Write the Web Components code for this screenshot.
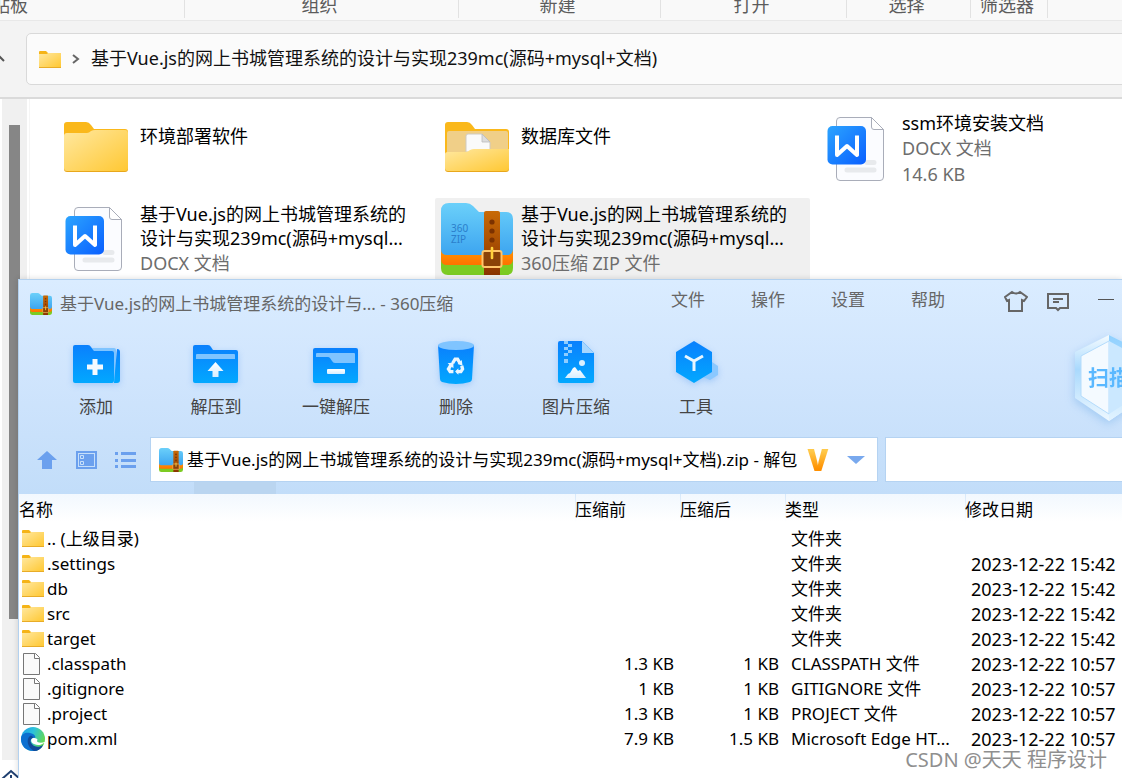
<!DOCTYPE html>
<html lang="zh-CN">
<head>
<meta charset="utf-8">
<title>360压缩</title>
<style>
  html, body {
    height: 100%;
    margin: 0;
    overflow: hidden;
  }

  body {
    font-family: "Noto Sans", "Noto Sans CJK SC", sans-serif;
    font-size: 18px;
    line-height: 24px;
    color: #000;
    background: #fff;
  }
</style>
</head>
<body>

<desktop-view>
  <file-explorer>
    <ribbon-bar slot="ribbon"></ribbon-bar>
    <address-bar slot="address">基于Vue.js的网上书城管理系统的设计与实现239mc(源码+mysql+文档)</address-bar>
    <file-tile icon="folder-big">环境部署软件</file-tile>
    <file-tile icon="folder-open">数据库文件</file-tile>
    <file-tile icon="docx" kind="DOCX 文档" size="14.6 KB">ssm环境安装文档</file-tile>
    <file-tile icon="docx" kind="DOCX 文档">基于Vue.js的网上书城管理系统的<br>设计与实现239mc(源码+mysql...</file-tile>
    <file-tile icon="zip-big" kind="360压缩 ZIP 文件" selected>基于Vue.js的网上书城管理系统的<br>设计与实现239mc(源码+mysql...</file-tile>
  </file-explorer>

  <zip-window slot="window">
    <zip-titlebar slot="title">基于Vue.js的网上书城管理系统的设计与... - 360压缩</zip-titlebar>
    <tool-button slot="tools" icon="add">添加</tool-button>
    <tool-button slot="tools" icon="extract">解压到</tool-button>
    <tool-button slot="tools" icon="one-key">一键解压</tool-button>
    <tool-button slot="tools" icon="delete">删除</tool-button>
    <tool-button slot="tools" icon="image">图片压缩</tool-button>
    <tool-button slot="tools" icon="tools">工具</tool-button>
    <scan-badge slot="badge">扫描</scan-badge>
    <zip-pathbar slot="path"></zip-pathbar>
    <archive-list></archive-list>
  </zip-window>

  <span slot="watermark">CSDN @天天 程序设计</span>
</desktop-view>

<script>
const DEFS = `
  <linearGradient id="y" x1="0" y1="0" x2="1" y2="1"><stop offset="0" stop-color="#ffe8a0"/><stop offset="1" stop-color="#ffc833"/></linearGradient>
  <linearGradient id="b" x1="0" y1="0" x2="0" y2="1"><stop offset="0" stop-color="#0a80fd"/><stop offset="1" stop-color="#02a8ff"/></linearGradient>
  <linearGradient id="w" x1="0" y1="0" x2="1" y2="1"><stop offset="0" stop-color="#2ba4ff"/><stop offset="1" stop-color="#0a5fff"/></linearGradient>
  <linearGradient id="s" x1="0" y1="0" x2="0" y2="1"><stop offset="0" stop-color="#6bd0fa"/><stop offset="1" stop-color="#3da5f0"/></linearGradient>
  <linearGradient id="o" x1="0" y1="0" x2="0" y2="1"><stop offset="0" stop-color="#ff9a00"/><stop offset="1" stop-color="#ff7200"/></linearGradient>
  <linearGradient id="n" x1="0" y1="0" x2="0" y2="1"><stop offset="0" stop-color="#c86a06"/><stop offset="1" stop-color="#8a3400"/></linearGradient>
  <linearGradient id="h" x1="0" y1="0" x2="0" y2="1"><stop offset="0" stop-color="#fff"/><stop offset="1" stop-color="#d6eeff"/></linearGradient>`;

const ZIP_BODY = `
  <path fill="#7ccb22" d="M0 48h72v17q0 7-7 7H7q-7 0-7-7z"/>
  <path fill="url(#o)" d="M0 44h72v12q0 6-6 6H6q-6 0-6-6z"/>
  <path fill="url(#s)" d="M0 8q0-8 8-8h17q4 0 7 3l6 6h27q7 0 7 7v30q0 6-6 6H6q-6 0-6-6z"/>
  <path fill="url(#n)" d="M43 10q0-2 2-2h12q2 0 2 2v62H43z"/>
  <g fill="#7c3200"><circle cx="51" cy="19" r="2.6"/><circle cx="51" cy="28" r="2.6"/><circle cx="51" cy="37" r="2.6"/></g>
  <rect x="41.500" y="48" width="19" height="16" rx="2" fill="#8a4208" stroke="#ffc56a" stroke-width="2"/>
  <path stroke="#ffd23c" stroke-width="2.600" stroke-linecap="round" d="M51 45v10"/>`;

const ICONS = {
  'folder-big': [72, 72, `
    <path fill="#fab81b" d="M4 12q0-3 3-3h19q3 0 5 3l3 4h31q3 0 3 3v8H4z"/>
    <path fill="#e8a71c" d="M4 24h64v32q0 3-3 3H7q-3 0-3-3z"/>
    <path fill="url(#y)" d="M4 23q0-3 3-3h20q2 0 4-2 2-1 4-1h30q3 0 3 3v35q0 3-3 3H7q-3 0-3-3z"/>`],
  'folder-open': [72, 72, `
    <path fill="#fab81b" d="M4 12q0-3 3-3h19q3 0 5 3l3 4h31q3 0 3 3v35H4z"/>
    <path fill="#f0cf88" d="M6 20q0-2 2-2h57q2 0 2 2v20H6z"/>
    <path fill="#fafafa" stroke="#cfcac0" d="M25 39V23q0-2 2-2h14l8 8v10z"/>
    <path fill="#ddd" stroke="#bbb" stroke-width=".8" d="M41 21v8h8z"/>
    <path fill="#e8a71c" d="M4 42h64v14q0 3-3 3H7q-3 0-3-3z"/>
    <path fill="url(#y)" d="M4 41q0-2 3-2h17q3 0 5-2 2-1 4-1h35v19q0 3-3 3H7q-3 0-3-3z"/>`],
  'docx': [72, 72, `
    <g transform="translate(1 0)">
      <path fill="#fbfcff" stroke="#a9adb9" d="M17 4.500h31.500l12 12V64q0 3.500-3.500 3.500H17q-3.500 0-3.500-3.500V8q0-3.500 3.500-3.500z"/>
      <path fill="#fff" stroke="#a9adb9" d="M48.500 4.500V14q0 2.500 2.500 2.500h9.500z"/>
      <path stroke="#e8eaed" stroke-width="5" stroke-linecap="round" d="M44 49.500h7M24 57h27"/>
      <rect x="4.500" y="13" width="38.500" height="38.500" rx="5" fill="url(#w)"/>
      <path fill="none" stroke="#fff" stroke-width="4" stroke-linejoin="round" d="M14 22.500V42l10-9 10 9V22.500"/>
    </g>`],
  'zip-big': [72, 72, ZIP_BODY + `
    <g fill="#2b7ecb"><text x="10" y="29" font-size="10">360</text><text x="10" y="40" font-size="10">ZIP</text></g>`],
  'zip': [72, 72, ZIP_BODY],
  'folder': [22, 17, `
    <path fill="#f5b417" d="M0 1q0-1 1-1h6l2 2h13v4H0z"/>
    <path fill="#e8ac28" d="M0 4h22v13H0z"/>
    <path fill="url(#y)" d="M0 3h8l1-1h13v14H0z"/>`],
  'file': [22, 24, `
    <path fill="#fafafa" stroke="#777" d="M2.500 1.500h12l4 4v17h-16z"/>
    <path fill="#fff" stroke="#777" d="M13.500 1.500v5h5"/>`],
  'edge': [24, 24, `
    <linearGradient id="e1" x1="0" y1="0" x2="1" y2=".4"><stop offset="0" stop-color="#1a9be8"/><stop offset=".5" stop-color="#2cc1dc"/><stop offset="1" stop-color="#62d957"/></linearGradient>
    <circle cx="12" cy="12" r="12" fill="url(#e1)"/>
    <path fill="#0d6fd0" d="M0 12C0 6 6 5 9 6c5 1 6 4 5 5-4-1-7 4-4 7 3 4 9 3 12 0-2 4-6 6-10 6C5 24 0 19 0 12z"/>
    <path fill="#114a9a" d="M9 9c-4 3-3 11 4 15 4 0 7-2 9-6-4 3-9 2-11-1-2-2-2-5 1-6 1 0-1-3-3-2z"/>
    <path fill="#fff" d="M12 11c-3 1-2 5 1 6 4 2 7 1 10-1l1 1v-2c-3 1-8 1-8-1 0-1 1-1 0-2s-2-1-4-1z"/>`],
  'add': [48, 48, `
    <path fill="#7fc4ff" d="M20 10h22q2 0 2 2v30h-5z"/>
    <path fill="url(#b)" d="M45 11q3 0 3 3v28q0 3-3 3h-3z"/>
    <path fill="url(#b)" d="M1 9q0-2 2-2h13q2 0 3 2l3 4h18q2 0 2 2v27q0 3-2 3H3q-2 0-2-2z"/>
    <path stroke="#f4faff" stroke-width="5" d="M23 21v16M15 29h16"/>`],
  'extract': [48, 48, `
    <path fill="url(#b)" d="M1 9q0-2 2-2h13q2 0 3 2l2 3h23q2 0 2 2v29q0 2-2 2H3q-2 0-2-2z"/>
    <path fill="#7fc4ff" d="M5 16h37q1 0 1 1v4H4v-4q0-1 1-1z"/>
    <path fill="url(#h)" d="M23.500 24l8 9h-5v6h-6v-6h-5z"/>`],
  'one-key': [48, 48, `
    <rect x="1" y="10" width="45" height="35" rx="2" fill="url(#b)"/>
    <path fill="#7fc4ff" d="M4 16q0-1 1-1h37q1 0 1 1v9H23q-2 0-3-2l-2-3q-1-1-2-1H4z"/>
    <rect x="15" y="31" width="18" height="5" rx="1" fill="url(#h)"/>`],
  'delete': [48, 48, `
    <path fill="url(#b)" d="M6 7h36l-2 34q0 2-2 3-14 4-28 0-2-1-2-3z"/>
    <ellipse cx="24" cy="7.500" rx="18" ry="4.500" fill="#7fc4ff"/>
    <g transform="translate(4 4.500) scale(.83)">
      <g fill="none" stroke="#e9f6ff" stroke-width="4"><path d="M20 25l3-5h3l3 5M31 28l1 4-2 3h-5M21 35h-4l-2-3 3-5"/></g>
      <path fill="#e9f6ff" d="M31 21l1 7-6-2zM27 31v8l-4-4zM14 25l7-1 0 7z"/>
    </g>`],
  'image': [48, 48, `
    <path fill="url(#b)" d="M8 3h22l12 12v28q0 2-2 2H8q-2 0-2-2V5q0-2 2-2z"/>
    <path fill="#a6d6ff" d="M30 3l12 12H30z"/>
    <path fill="#8fcdff" d="M12 3h4v3h-4zM16 6h4v3h-4zM12 9h4v3h-4zM16 12h4v3h-4zM12 15h4v3h-4zM12 21h4v4h-4z"/>
    <circle cx="30" cy="25" r="3" fill="#d8efff"/>
    <path fill="url(#h)" d="M13 40l3-4 2-1 3-5 2-1 3 4 2-1 3 4 3 4z"/>`],
  'tools': [48, 48, `
    <path fill="#8ac8ff" d="M40 24l6 4v9l-8 5-7-3z"/>
    <path fill="url(#b)" d="M22 3l18 11v20L22 45 4 34V14z"/>
    <path fill="none" stroke="#e9f6ff" stroke-width="3" d="M13 18l9 5 9-5M22 22v11"/>`],
  'up': [22, 20, `<path fill="#6ba0ee" d="M11 1l10 9h-5v9H6v-9H1z"/>`],
  'preview': [22, 20, `
    <path fill="none" stroke="#6ba0ee" stroke-width="2" d="M2 2h19v16H2z"/>
    <path fill="#6ba0ee" d="M4 4h15v12H4z"/>
    <path fill="none" stroke="#c8e0fa" d="M5.500 5.500h3v3h-3zM5.500 11.500h3v3h-3z"/>`],
  'list': [22, 20, `<path fill="#6ba0ee" d="M1 2h3v3H1zM7 2h15v3H7zM1 9h3v3H1zM7 9h15v3H7zM1 15h3v3H1zM7 15h15v3H7z"/>`],
  'shirt': [24, 24, `<path fill="none" stroke="#666" stroke-width="2" d="M8 2q4 3 8 0l7 5-3 4-2-1v11H5V10l-2 1-2-4z"/>`],
  'message': [24, 24, `
    <path fill="none" stroke="#666" stroke-width="2" d="M2 4h20v14h-8l-2 2-2-2H2z"/>
    <path stroke="#666" stroke-width="2" d="M7 9h10M7 12h6"/>`],
  'minimize': [16, 24, `<path stroke="#555" d="M0 9.500h16"/>`],
  'crumb': [8, 12, `<path fill="none" stroke="#666" stroke-width="2" d="M1 2l5 4-5 4"/>`],
  'caret': [8, 12, `<path fill="none" stroke="#555" stroke-width="2" d="M-3 8l3-4 4 4"/>`],
  'drop': [18, 10, `<path fill="#79a9ee" d="M0 1h18L9 9z"/>`],
  'home': [20, 12, `<path fill="none" stroke="#1f3f70" stroke-width="2" d="M1 11l9-8 9 8M10 7v5"/>`]
};

class AppIcon extends HTMLElement {
  constructor() {
    super();
    this.attachShadow({ mode: 'open' });
  }

  connectedCallback() {
    const [w, h, body] = ICONS[this.getAttribute('name')];
    this.shadowRoot.innerHTML = `
      <style>
        :host { display: block; flex: none; width: ${w}px; height: ${h}px; }
        svg { display: block; width: 100%; height: 100%; }
      </style>
      <svg viewBox="0 0 ${w} ${h}" aria-hidden="true"><defs>${DEFS}</defs>${body}</svg>
    `;
  }
}
customElements.define('app-icon', AppIcon);

// small helper for elements whose markup never changes
function define(name, render) {
  customElements.define(name, class extends HTMLElement {
    constructor() {
      super();
      this.attachShadow({ mode: 'open' });
    }

    connectedCallback() {
      this.shadowRoot.innerHTML = render(this);
    }
  });
}

define('desktop-view', () => `
  <style>
    :host { display: block; position: relative; height: 100vh; overflow: hidden; }
    .window { position: absolute; top: 279px; left: 18px; right: 0; bottom: 0; }
    .watermark {
      position: absolute; right: 15px; bottom: 6px;
      font-size: 20px; color: #8f8f8f; text-shadow: 0 0 2px #fff; white-space: nowrap;
    }
  </style>
  <slot></slot>
  <div class="window"><slot name="window"></slot></div>
  <div class="watermark"><slot name="watermark"></slot></div>
`);

define('file-explorer', () => `
  <style>
    :host { display: flex; flex-direction: column; height: 100%; }
    .body { flex: 1; display: flex; min-height: 0; }
    .side {
      flex: none; box-sizing: border-box; width: 30px;
      display: flex; flex-direction: column;
      border-left: 2px solid #fff; border-right: 1px solid #f5f5f5;
    }
    .track { flex: 1; width: 25px; background: #f0f0f0; padding-top: 26px; }
    .thumb { width: 11px; height: 494px; margin-left: 7px; background: #868686; }
    app-icon { margin: 8px 0 -2px -1px; }
    .grid {
      display: grid; grid-template-columns: repeat(3, 375px); grid-auto-rows: 82px;
      gap: 8px 6px; align-content: start; padding: 9px 0 0 24px;
    }
  </style>
  <slot name="ribbon"></slot>
  <slot name="address"></slot>
  <div class="body">
    <div class="side">
      <div class="track"><div class="thumb"></div></div>
      <app-icon name="home"></app-icon>
    </div>
    <div class="grid"><slot></slot></div>
  </div>
`);

define('ribbon-bar', () => `
  <style>
    :host {
      display: flex; height: 20px; overflow: hidden;
      background: #f9f9f9; border-bottom: 1px solid #e8e8e8; color: #5c5c5c;
    }
    div {
      box-sizing: border-box; height: 18px; padding-right: 4px;
      display: flex; align-items: flex-end; justify-content: center;
      border-right: 1px solid #e2e2e2; white-space: nowrap;
    }
    span { line-height: 26px; }
    .clip { justify-content: flex-start; }
    .clip span { display: flex; justify-content: flex-end; width: 28px; }
  </style>
  <div class="clip" style="width:185px"><span>贴板</span></div>
  <div style="width:274px"><span>组织</span></div>
  <div style="width:202px"><span>新建</span></div>
  <div style="width:186px"><span>打开</span></div>
  <div style="width:124px"><span>选择</span></div>
  <div style="width:77px"><span>筛选器</span></div>
`);

define('address-bar', () => `
  <style>
    :host {
      display: flex; align-items: center; padding: 12px 0; gap: 18px;
      background: #f3f3f3; border-bottom: 2px solid #dadada;
    }
    .box {
      flex: 1; box-sizing: border-box; height: 52px; margin-right: -8px; padding: 0 12px;
      display: flex; align-items: center; gap: 11px;
      border: 1px solid #d9d9d9; border-radius: 5px; background: #fbfbfb;
    }
    button { border: 0; padding: 0 0 2px; background: none; font: inherit; color: #111; white-space: nowrap; }
  </style>
  <app-icon name="caret"></app-icon>
  <div class="box">
    <app-icon name="folder"></app-icon>
    <app-icon name="crumb"></app-icon>
    <button><slot></slot></button>
  </div>
`);

define('file-tile', el => {
  const kind = el.getAttribute('kind') || '&nbsp;';
  const size = el.getAttribute('size');
  return `
  <style>
    :host { display: flex; align-items: center; gap: 8px; padding-left: 6px; white-space: nowrap; }
    :host([selected]) { background: #f0f0f0; border-radius: 2px; }
    .meta { color: #6d6d6d; line-height: 26px; }
  </style>
  <app-icon name="${el.getAttribute('icon')}"></app-icon>
  <div>
    <div><slot></slot></div>
    <div class="meta">${kind}</div>
    ${size ? `<div class="meta">${size}</div>` : ''}
  </div>
`;
});

define('zip-window', () => `
  <style>
    :host {
      display: flex; flex-direction: column; box-sizing: border-box; height: 100%; overflow: hidden;
      border: solid #b3d1ef; border-width: 1px 0 0 1px;
      background: #fff; font-size: 17px;
      box-shadow: 0 0 6px rgba(0, 0, 0, .15);
    }
    .head { background: linear-gradient(#daecff, #d0e5fd 45%, #c2ddf9); }
    .tools { display: flex; padding: 10px 0 0 17px; height: 90px; }
    .badge { margin: -4px -21px 0 auto; }
  </style>
  <div class="head">
    <slot name="title"></slot>
    <div class="tools">
      <slot name="tools"></slot>
      <div class="badge"><slot name="badge"></slot></div>
    </div>
    <slot name="path"></slot>
  </div>
  <slot></slot>
`);

define('zip-titlebar', () => `
  <style>
    :host { display: flex; height: 48px; padding: 0 8px 0 10px; color: #666; white-space: nowrap; }
    app-icon[name="zip"] { width: 24px; height: 22px; margin-right: 7px; }
    .title { display: flex; align-items: center; }
    nav { display: flex; align-items: center; height: 40px; margin-left: auto; }
    button { border: 0; padding: 0; background: none; font: inherit; color: #666; }
    .menu { width: 80px; }
    .tools { display: flex; gap: 18px; margin-left: 36px; padding-top: 4px; }
    .min { margin-left: 10px; }
  </style>
  <div class="title"><app-icon name="zip"></app-icon><slot></slot></div>
  <nav>
    <button class="menu">文件</button>
    <button class="menu">操作</button>
    <button class="menu">设置</button>
    <button class="menu">帮助</button>
    <div class="tools">
      <button aria-label="皮肤"><app-icon name="shirt"></app-icon></button>
      <button aria-label="反馈"><app-icon name="message"></app-icon></button>
      <button class="min" aria-label="最小化"><app-icon name="minimize"></app-icon></button>
    </div>
  </nav>
`);

define('tool-button', el => `
  <style>
    :host { display: block; width: 120px; }
    button {
      display: flex; flex-direction: column; align-items: center; gap: 9px;
      width: 100%; border: 0; padding: 0; background: none; font: inherit; color: #444;
    }
    app-icon { filter: drop-shadow(0 2px 3px rgba(60, 140, 240, .3)); }
  </style>
  <button><app-icon name="${el.getAttribute('icon')}"></app-icon><span><slot></slot></span></button>
`);

define('scan-badge', () => `
  <style>
    :host { display: block; }
    button {
      display: grid; place-items: center; width: 68px; height: 88px;
      border: 0; padding: 0; background: none;
      font: bold 21px/24px "Noto Sans CJK SC", sans-serif; color: #5ab8ff; white-space: nowrap;
      filter: drop-shadow(-1px 3px 4px rgba(90, 160, 230, .35));
    }
    svg, span { grid-area: 1 / 1; }
    span { padding-bottom: 4px; }
  </style>
  <button>
    <svg width="68" height="88" viewBox="0 0 68 88" aria-hidden="true">
      <defs>
        <linearGradient id="f" x1="0" y1="0" x2="0" y2="1"><stop offset="0" stop-color="#f4fbff"/><stop offset=".4" stop-color="#a9d9fd"/><stop offset="1" stop-color="#eef8ff"/></linearGradient>
        <linearGradient id="g" x1="0" y1="0" x2="0" y2="1"><stop offset="0" stop-color="#8fd0ff"/><stop offset="1" stop-color="#e2f3ff"/></linearGradient>
      </defs>
      <path fill="url(#f)" d="M34 1L0 18v46l34 23 34-23V18z"/>
      <path fill="url(#g)" d="M34 1l34 17v46L34 87z"/>
      <path fill="#f4faff" stroke="#b4dcfc" d="M34 7L6 22v40l28 18z"/>
      <path fill="#cbe8ff" d="M34 7l28 15v40L34 80z"/>
    </svg>
    <span><slot></slot></span>
  </button>
`);

define('zip-pathbar', () => `
  <style>
    :host {
      display: flex; align-items: center; gap: 7px; padding: 9px 0 12px 17px;
      background: linear-gradient(#bad5f0, #bad5f0) 175px 100% / 82px 12px no-repeat;
    }
    button { border: 0; padding: 0; background: none; }
    .nav { display: flex; gap: 17px; width: 107px; }
    .path, .search { box-sizing: border-box; height: 45px; border: 1px solid #b5d3f2; background: #fff; }
    .path { flex: 0 1 728px; display: flex; align-items: center; padding: 0 12px 0 8px; }
    .path app-icon[name="zip"] { width: 24px; height: 24px; margin-right: 4px; }
    input { min-width: 0; border: 0; padding: 0; outline: 0; background: none; font: inherit; font-size: 17px; color: #000; }
    .path input { flex: 1; }
    .v {
      width: 26px; margin-right: 16px; text-align: center;
      font-size: 30px; line-height: 30px; font-weight: 900;
      color: transparent; background: linear-gradient(#ffc94a 20%, #ff9000 80%); background-clip: text; -webkit-background-clip: text;
    }
    .search { flex: 1; margin-right: -2px; padding: 0 8px; }
  </style>
  <div class="nav">
    <button aria-label="上级目录"><app-icon name="up"></app-icon></button>
    <button aria-label="预览"><app-icon name="preview"></app-icon></button>
    <button aria-label="列表"><app-icon name="list"></app-icon></button>
  </div>
  <div class="path">
    <app-icon name="zip"></app-icon>
    <input aria-label="路径" value="基于Vue.js的网上书城管理系统的设计与实现239mc(源码+mysql+文档).zip - 解包">
    <span class="v">V</span>
    <button aria-label="展开"><app-icon name="drop"></app-icon></button>
  </div>
  <input class="search" aria-label="搜索">
`);

const DIR = '文件夹';
const ROWS = [
  ['folder', '.. (上级目录)', '', '', DIR, ''],
  ['folder', '.settings', '', '', DIR, '2023-12-22 15:42'],
  ['folder', 'db', '', '', DIR, '2023-12-22 15:42'],
  ['folder', 'src', '', '', DIR, '2023-12-22 15:42'],
  ['folder', 'target', '', '', DIR, '2023-12-22 15:42'],
  ['file', '.classpath', '1.3 KB', '1 KB', 'CLASSPATH 文件', '2023-12-22 10:57'],
  ['file', '.gitignore', '1 KB', '1 KB', 'GITIGNORE 文件', '2023-12-22 10:57'],
  ['file', '.project', '1.3 KB', '1 KB', 'PROJECT 文件', '2023-12-22 10:57'],
  ['edge', 'pom.xml', '7.9 KB', '1.5 KB', 'Microsoft Edge HT...', '2023-12-22 10:57']
];

define('archive-list', () => `
  <style>
    :host { display: block; background: #fff; }
    table { width: 100%; table-layout: fixed; border-collapse: collapse; white-space: nowrap; }
    th {
      height: 32px; padding: 0; text-align: left; font-weight: normal;
      background: linear-gradient(#f2f8fe, #fff 28px);
    }
    th + th { background: linear-gradient(#d6e8fa, #fff 28px) 0 0 / 1px 100% no-repeat, linear-gradient(#f2f8fe, #fff 28px); }
    td { height: 25px; padding: 0 6px; line-height: 24px; }
    td:first-child { padding: 0 2px; }
    .name { display: flex; align-items: center; height: 25px; }
    .icon { width: 26px; display: flex; }
    .icon app-icon[name="folder"] { margin-left: 1px; }
    .size { text-align: right; }
    .date { font-size: 18px; }
  </style>
  <table>
    <colgroup><col><col style="width:105px"><col style="width:105px"><col style="width:180px"><col style="width:157px"></colgroup>
    <thead><tr><th>名称</th><th>压缩前</th><th>压缩后</th><th>类型</th><th>修改日期</th></tr></thead>
    <tbody>
      ${ROWS.map(([icon, name, before, after, type, date]) => `
      <tr>
        <td><div class="name"><span class="icon"><app-icon name="${icon}"></app-icon></span>${name}</div></td>
        <td class="size">${before}</td>
        <td class="size">${after}</td>
        <td>${type}</td>
        <td class="date">${date}</td>
      </tr>`).join('')}
    </tbody>
  </table>
`);
</script>
</body>
</html>
